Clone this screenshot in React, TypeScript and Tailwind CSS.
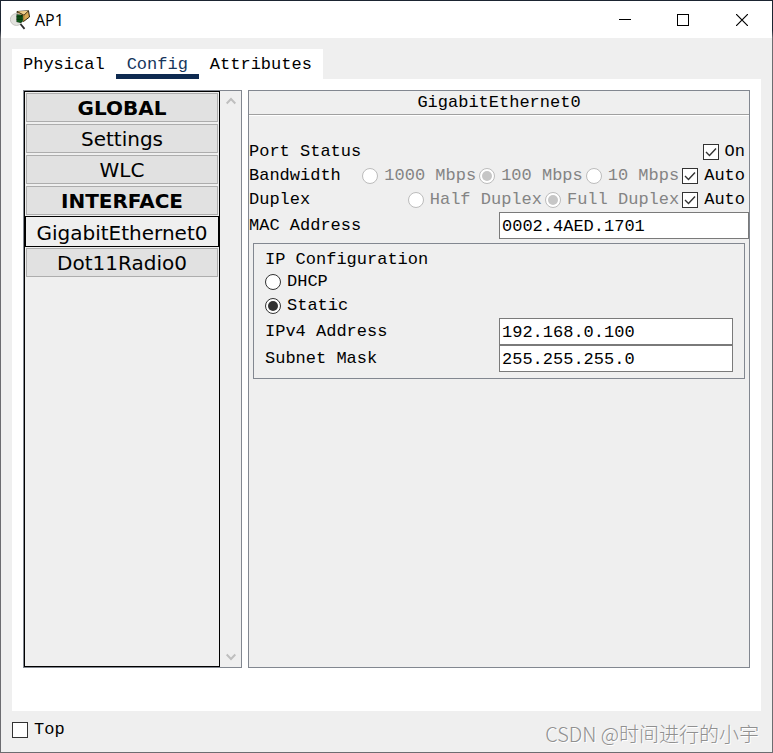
import React, { useState } from "react";

const tabs = ["Physical", "Config", "Attributes"];

const sideItems = [
  { label: "GLOBAL", heading: true },
  { label: "Settings", heading: false },
  { label: "WLC", heading: false },
  { label: "INTERFACE", heading: true },
  { label: "GigabitEthernet0", heading: false },
  { label: "Dot11Radio0", heading: false },
];

const AppIcon = () => (
  <svg width="20" height="20" viewBox="0 0 20 20" aria-hidden="true">
    <path d="M7 1.5 L18.5 0.8 L19.5 7 L13.5 11.5 L8 10 Z" fill="#d9a955" stroke="#2e2410" strokeWidth="1" />
    <path d="M7 1.5 L14 5.2 L18.5 0.8" fill="#f0cd8a" stroke="#2e2410" strokeWidth="0.9" />
    <path d="M13.5 11.5 L14 5.2" stroke="#8a6424" strokeWidth="0.8" />
    <ellipse cx="6.5" cy="9.5" rx="6.2" ry="6" fill="#e2e2de" stroke="#bdbdb8" strokeWidth="0.8" />
    <path d="M6.5 4.2 L12.8 5 L12.8 11 L11 13 L6.5 12 Z" fill="#06290a" />
    <path d="M8 5 V12 M10 5 V12.5 M12 6 V11.5" stroke="#1f9a2e" strokeWidth="0.8" />
    <path d="M6.5 6.8 H12.8 M6.5 9.2 H12.8" stroke="#06290a" strokeWidth="0.8" />
    <path d="M10.5 14 L14.5 18.8" stroke="#2a2a2a" strokeWidth="1.8" />
  </svg>
);

type ToggleProps = {
  type: "radio" | "checkbox";
  label: string;
  name?: string;
  checked?: boolean;
  disabled?: boolean;
};

const Toggle = ({ type, label, name, checked = false, disabled = false }: ToggleProps) => {
  return (
    <label className={disabled ? "flex items-center gap-[6px] text-[#848484]" : "flex items-center gap-[6px]"}>
      <span className="grid size-4 shrink-0">
        <input
          type={type}
          name={name}
          defaultChecked={checked}
          disabled={disabled}
          className={
            type === "radio"
              ? "peer col-start-1 row-start-1 size-4 appearance-none rounded-full border border-[#333333] bg-white disabled:border-[#bcbcbc]"
              : "peer col-start-1 row-start-1 size-4 appearance-none border border-[#333333] bg-white"
          }
        />
        {type === "radio" ? (
          <span className="pointer-events-none invisible col-start-1 row-start-1 m-[3px] rounded-full bg-[#333333] peer-checked:visible peer-disabled:bg-[#c6c6c6]" />
        ) : (
          <svg
            viewBox="0 0 16 16"
            className="pointer-events-none invisible col-start-1 row-start-1 size-4 peer-checked:visible"
            fill="none"
            stroke="#333333"
            strokeWidth="1.4"
          >
            <path d="M3 8 L6.5 11.5 L13 4.5" />
          </svg>
        )}
      </span>
      <span className="whitespace-pre">{label}</span>
    </label>
  );
};

const Field = ({ id, label, value }: { id: string; label: string; value: string }) => (
  <div className="flex items-center">
    <label htmlFor={id} className="w-1/2">
      {label}
    </label>
    <input
      id={id}
      type="text"
      defaultValue={value}
      className="h-[27px] min-w-0 flex-1 border border-[#7a7a7a] bg-white px-[2px] pt-[2px] outline-none"
    />
  </div>
);

const TitleBar = () => (
  <header className="flex h-[37px] items-center bg-white pl-[9px] font-['Open_Sans',sans-serif]">
    <AppIcon />
    <h1 className="ml-[5px] flex-1 text-[16px] leading-5">AP1</h1>
    <div className="flex">
      <button type="button" aria-label="Minimize" className="grid h-9 w-[58px] place-items-center">
        <svg width="12" height="12" stroke="#000" fill="none">
          <path d="M0 5.5 H12" />
        </svg>
      </button>
      <button type="button" aria-label="Maximize" className="grid h-9 w-[58px] place-items-center">
        <svg width="12" height="12" stroke="#000" fill="none">
          <rect x="0.5" y="0.5" width="11" height="11" />
        </svg>
      </button>
      <button type="button" aria-label="Close" className="grid h-9 w-[60px] place-items-center">
        <svg width="12" height="12" stroke="#000" strokeWidth="1.2" fill="none">
          <path d="M0 0 L12 12 M12 0 L0 12" />
        </svg>
      </button>
    </div>
  </header>
);

const Sidebar = () => {
  const [selected, setSelected] = useState("GigabitEthernet0");

  return (
    <aside className="flex w-[219px] shrink-0 border border-[#828790] bg-[#efefef]">
      <nav className="flex flex-1 flex-col gap-[2px] border border-black p-px font-['DejaVu_Sans',sans-serif] text-[20px] leading-6">
        {sideItems.map((item) => (
          <button
            key={item.label}
            type="button"
            onClick={() => setSelected(item.label)}
            className={
              item.label === selected
                ? "-m-px h-[31px] border border-black bg-[#efefef] pt-[2px]"
                : item.heading
                  ? "h-[29px] border border-[#adadad] bg-[#e1e1e1] pt-px font-bold"
                  : "h-[29px] border border-[#adadad] bg-[#e1e1e1] pt-px"
            }
          >
            {item.label}
          </button>
        ))}
      </nav>
      <div className="flex w-[21px] flex-col items-center justify-between py-[6px]">
        <svg width="10" height="8" fill="none" stroke="#bfbfbf" strokeWidth="2">
          <path d="M0.7 6.5 L5 2 L9.3 6.5" />
        </svg>
        <svg width="10" height="8" fill="none" stroke="#bfbfbf" strokeWidth="2">
          <path d="M0.7 1.5 L5 6 L9.3 1.5" />
        </svg>
      </div>
    </aside>
  );
};

const PortSettings = () => (
  <section className="min-w-0 flex-1 border border-[#828790] bg-[#efefef]">
    <h2 className="h-6 border-b border-[#a0a0a0] text-center">GigabitEthernet0</h2>
    <div className="border-t border-white pt-[24px]">
      <div className="flex h-6 items-center justify-between pr-1">
        <span>Port Status</span>
        <Toggle type="checkbox" label="On" checked />
      </div>
      <div className="flex h-6 items-center justify-between pr-1" role="group" aria-label="Bandwidth">
        <span>Bandwidth</span>
        <div className="flex gap-[3px]">
          <Toggle type="radio" name="bandwidth" label="1000 Mbps" disabled />
          <Toggle type="radio" name="bandwidth" label="100 Mbps" checked disabled />
          <Toggle type="radio" name="bandwidth" label="10 Mbps" disabled />
          <Toggle type="checkbox" label="Auto" checked />
        </div>
      </div>
      <div className="flex h-6 items-center justify-between pr-1" role="group" aria-label="Duplex">
        <span>Duplex</span>
        <div className="flex gap-[3px]">
          <Toggle type="radio" name="duplex" label="Half Duplex" disabled />
          <Toggle type="radio" name="duplex" label="Full Duplex" checked disabled />
          <Toggle type="checkbox" label="Auto" checked />
        </div>
      </div>
      <Field id="mac" label="MAC Address" value="0002.4AED.1701" />
      <div className="mx-1 mt-1 border border-[#828790] py-[6px]" role="group" aria-labelledby="ip-title">
        <div className="pl-[11px]">
          <h3 id="ip-title" className="leading-5">
            IP Configuration
          </h3>
          <div className="flex h-6 items-center">
            <Toggle type="radio" name="ip" label="DHCP" />
          </div>
          <div className="flex h-6 items-center">
            <Toggle type="radio" name="ip" label="Static" checked />
          </div>
        </div>
        <div className="px-[11px]">
          <Field id="ipv4" label="IPv4 Address" value="192.168.0.100" />
          <Field id="mask" label="Subnet Mask" value="255.255.255.0" />
        </div>
      </div>
    </div>
  </section>
);

const App = () => {
  const [activeTab, setActiveTab] = useState("Config");

  return (
    <div className="flex min-h-screen bg-linear-to-b from-[#1b2431] from-4% to-[#6c6c70] to-5% p-px">
      <div className="flex min-w-0 flex-1 flex-col bg-[#efefef] font-['Liberation_Mono',monospace] text-[17px] leading-6 text-black">
        <TitleBar />
        <main className="flex flex-1 flex-col px-[11px] pt-[11px]">
          <div className="flex h-[30px] self-start bg-white" role="tablist">
            {tabs.map((tab) => (
              <button
                key={tab}
                type="button"
                role="tab"
                aria-selected={tab === activeTab}
                onClick={() => setActiveTab(tab)}
                className={
                  tab === activeTab
                    ? "border-t-4 border-b-5 border-t-transparent border-b-[#0e2a50] px-[11px] text-[#16365c]"
                    : "border-t-4 border-b-5 border-transparent px-[11px]"
                }
              >
                {tab}
              </button>
            ))}
          </div>
          <div className="flex flex-1 gap-[6px] bg-white px-[11px] pt-[11px] pb-[43px]">
            <Sidebar />
            <PortSettings />
          </div>
        </main>
        <footer className="flex h-[41px] items-center justify-between pr-[13px] pb-1 pl-[11px]">
          <Toggle type="checkbox" label="Top" />
          <span className="pt-2 font-['Noto_Sans_CJK_SC',sans-serif] text-[20px] font-light text-[#909090] [text-shadow:1px_1px_0_#ffffff]">
            CSDN @时间进行的小宇
          </span>
        </footer>
      </div>
    </div>
  );
};

export default App;
